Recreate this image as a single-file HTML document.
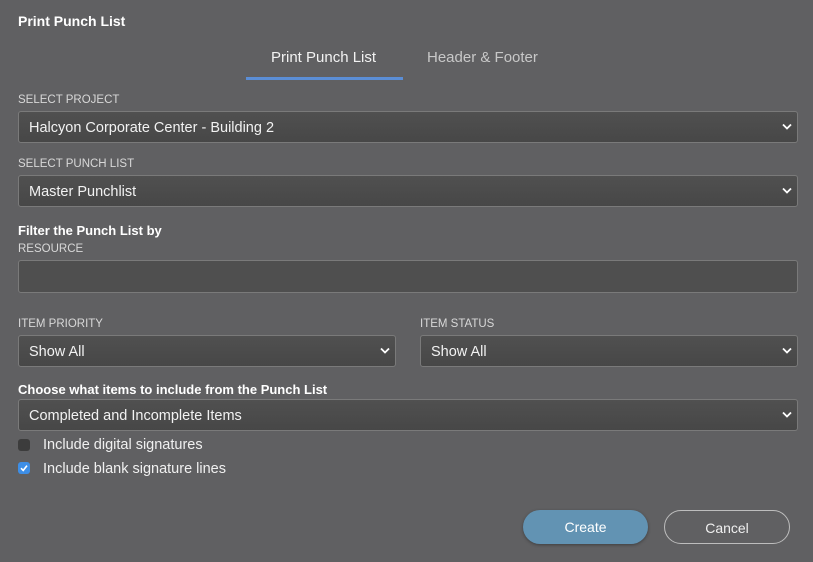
<!DOCTYPE html>
<html><head><style>
body{margin:0;width:813px;height:562px;background:#606062;font-family:"Liberation Sans",sans-serif;color:#fff;position:relative;overflow:hidden}
.a{position:absolute}
.lbl{font-size:11.5px;color:#d8d8d8}
.b{font-size:13px;font-weight:bold}
.sel{position:absolute;left:18px;width:778px;height:30px;background:linear-gradient(#505050,#474747);border:1px solid #7a7a7a;border-radius:3px;box-sizing:content-box;font-size:14.5px;line-height:33px;text-indent:10px;color:#f2f2f2}
.sel svg{position:absolute;right:5px;top:11px}
.btn{position:absolute;top:510px;height:34px;border-radius:17px;font-size:14px;line-height:35px;text-align:center;box-sizing:border-box}
</style></head><body>
<div class="a b" style="left:18px;top:13px;font-size:14px">Print Punch List</div>
<div class="a" style="left:271px;top:49px;font-size:15px;color:#f2f2f2">Print Punch List</div>
<div class="a" style="left:427px;top:49px;font-size:15px;color:#c8c8c8">Header &amp; Footer</div>
<div class="a" style="left:246px;top:77px;width:157px;height:3px;background:#5b8ed6"></div>

<div class="a lbl" style="left:18px;top:94px">SELECT PROJECT</div>
<div class="sel" style="top:111px">Halcyon Corporate Center - Building 2<svg width="10" height="8"><path d="M1 1.5L5 5.5L9 1.5" stroke="#fff" stroke-width="1.8" fill="none"/></svg></div>
<div class="a lbl" style="left:18px;top:158px">SELECT PUNCH LIST</div>
<div class="sel" style="top:175px">Master Punchlist<svg width="10" height="8"><path d="M1 1.5L5 5.5L9 1.5" stroke="#fff" stroke-width="1.8" fill="none"/></svg></div>
<div class="a b" style="left:18px;top:223px">Filter the Punch List by</div>
<div class="a lbl" style="left:18px;top:243px">RESOURCE</div>
<div class="sel" style="top:260px;height:31px;background:#4f4f4f"></div>
<div class="a lbl" style="left:18px;top:318px">ITEM PRIORITY</div>
<div class="sel" style="top:335px;width:376px">Show All<svg width="10" height="8"><path d="M1 1.5L5 5.5L9 1.5" stroke="#fff" stroke-width="1.8" fill="none"/></svg></div>
<div class="a lbl" style="left:420px;top:318px">ITEM STATUS</div>
<div class="sel" style="top:335px;left:420px;width:376px">Show All<svg width="10" height="8"><path d="M1 1.5L5 5.5L9 1.5" stroke="#fff" stroke-width="1.8" fill="none"/></svg></div>
<div class="a b" style="left:18px;top:382px">Choose what items to include from the Punch List</div>
<div class="sel" style="top:399px">Completed and Incomplete Items<svg width="10" height="8"><path d="M1 1.5L5 5.5L9 1.5" stroke="#fff" stroke-width="1.8" fill="none"/></svg></div>
<div class="a" style="left:18px;top:439px;width:12px;height:12px;border-radius:3px;background:#3c3c3c"></div>
<div class="a" style="left:43px;top:437px;font-size:14.5px;color:#f0f0f0">Include digital signatures</div>
<div class="a" style="left:18px;top:462px;width:12px;height:12px;border-radius:3px;background:#3d8ee6"><svg width="12" height="12" style="position:absolute;left:0;top:0"><path d="M3 6.2L5.2 8.4L9 3.6" stroke="#fff" stroke-width="1.6" fill="none"/></svg></div>
<div class="a" style="left:43px;top:461px;font-size:14.5px;color:#f0f0f0">Include blank signature lines</div>
<div class="btn" style="left:523px;width:125px;background:#6293b3;box-shadow:0 1px 3px rgba(0,0,0,.35)">Create</div>
<div class="btn" style="left:664px;width:126px;border:1px solid #bdbdbd;color:#f0f0f0">Cancel</div>
</body></html>
